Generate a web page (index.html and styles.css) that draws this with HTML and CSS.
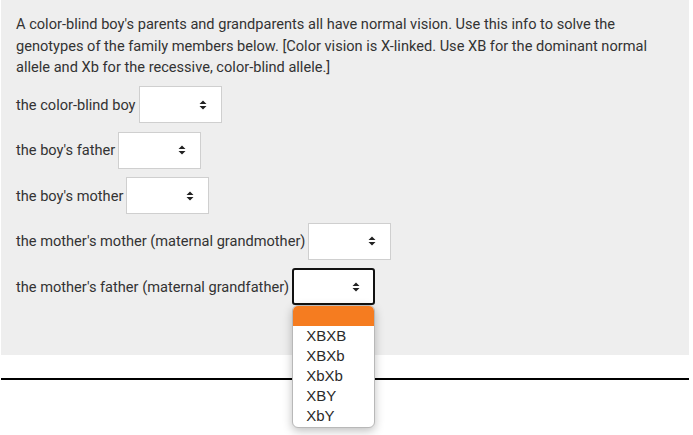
FILE: index.html
```html
<!DOCTYPE html>
<html>
<head>
<meta charset="utf-8">
<link rel="stylesheet" href="styles.css">
</head>
<body>
<div class="panel">
  <p class="intro">A color-blind boy's parents and grandparents all have normal vision. Use this info to solve the genotypes of the family members below. [Color vision is X-linked. Use XB for the dominant normal allele and Xb for the recessive, color-blind allele.]</p>
  <div class="rows">
    <div class="row"><span class="label">the color-blind boy</span><span class="select"><svg class="arrows" width="8" height="10" viewBox="0 0 8 10"><path d="M4 0.5 L7.5 4 L0.5 4 Z M4 9.5 L7.5 6 L0.5 6 Z" fill="#222"/></svg></span></div>
    <div class="row"><span class="label">the boy's father</span><span class="select"><svg class="arrows" width="8" height="10" viewBox="0 0 8 10"><path d="M4 0.5 L7.5 4 L0.5 4 Z M4 9.5 L7.5 6 L0.5 6 Z" fill="#222"/></svg></span></div>
    <div class="row"><span class="label">the boy's mother</span><span class="select"><svg class="arrows" width="8" height="10" viewBox="0 0 8 10"><path d="M4 0.5 L7.5 4 L0.5 4 Z M4 9.5 L7.5 6 L0.5 6 Z" fill="#222"/></svg></span></div>
    <div class="row"><span class="label">the mother's mother (maternal grandmother)</span><span class="select"><svg class="arrows" width="8" height="10" viewBox="0 0 8 10"><path d="M4 0.5 L7.5 4 L0.5 4 Z M4 9.5 L7.5 6 L0.5 6 Z" fill="#222"/></svg></span></div>
    <div class="row"><span class="label">the mother's father (maternal grandfather)</span><span class="select focused"><svg class="arrows" width="8" height="10" viewBox="0 0 8 10"><path d="M4 0.5 L7.5 4 L0.5 4 Z M4 9.5 L7.5 6 L0.5 6 Z" fill="#222"/></svg>
      <ul class="dropdown">
        <li class="opt active">&nbsp;</li>
        <li class="opt">XBXB</li>
        <li class="opt">XBXb</li>
        <li class="opt">XbXb</li>
        <li class="opt">XBY</li>
        <li class="opt">XbY</li>
      </ul>
    </span></div>
  </div>
</div>
<hr class="rule">
</body>
</html>
```
FILE: styles.css
```css
html, body {
  margin: 0;
  padding: 0;
  background: #ffffff;
}
body {
  min-height: 435px;
  font-family: Roboto, "Liberation Sans", sans-serif;
  color: #333333;
}
.panel {
  margin-left: 1px;
  width: 688px;
  box-sizing: border-box;
  background: #eeeeee;
  padding: 14px 14px 50px 15px;
}
.intro {
  margin: 0;
  font-size: 14.6px;
  line-height: 21.5px;
}
.rows {
  margin-top: 7.5px;
  display: flex;
  flex-direction: column;
  gap: 8.5px;
}
.row {
  display: flex;
  align-items: center;
  gap: 3px;
  font-size: 14.6px;
  height: 37px;
}
.select {
  position: relative;
  box-sizing: border-box;
  width: 83px;
  height: 37px;
  background: #ffffff;
  border: 1px solid #cfcfcf;
  display: flex;
  align-items: center;
  justify-content: flex-end;
  padding-right: 14px;
}
.select.focused {
  border: 2px solid #111111;
  border-radius: 3px;
  padding-right: 13px;
}
.arrows {
  display: block;
}
.dropdown {
  position: absolute;
  top: calc(100% + 2px);
  left: -2px;
  width: 83px;
  box-sizing: border-box;
  margin: 0;
  padding: 0 0 1px 0;
  list-style: none;
  background: #ffffff;
  border: 1px solid #b8b8b8;
  border-radius: 6px;
  overflow: hidden;
  box-shadow: 0 3px 10px rgba(0, 0, 0, 0.25);
  font-family: "Liberation Sans", Arial, sans-serif;
  font-size: 15px;
  color: #2a2a2a;
  z-index: 2;
}
.opt {
  height: 20px;
  line-height: 20px;
  padding-left: 13px;
}
.opt.active {
  background: #f57c20;
  height: 20px;
}
.rule {
  margin: 23px 0 0 1px;
  width: 688px;
  border: 0;
  height: 2px;
  background: #000000;
}
```
